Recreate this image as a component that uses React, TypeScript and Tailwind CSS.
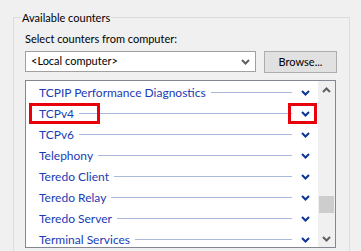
import { ReactNode } from 'react'

const font = { fontFamily: 'Lato, "Liberation Sans", Arial, sans-serif' }

const counters = [
  'TCPIP Performance Diagnostics',
  'TCPv4',
  'TCPv6',
  'Telephony',
  'Teredo Client',
  'Teredo Relay',
  'Teredo Server',
  'Terminal Services',
]

function Chevron({ color, className }: { color: string; className?: string }) {
  return (
    <svg width="9" height="6" viewBox="0 0 9 6" className={className}>
      <path d="M1 1 L4.5 4.5 L8 1" fill="none" stroke={color} strokeWidth="2" />
    </svg>
  )
}

function Row({ label, marked }: { label: string; marked?: boolean }): ReactNode {
  return (
    <div className="relative flex h-[21px] items-center pl-[13px]">
      <span className="whitespace-nowrap text-[12px] text-[#1a3cb4]">{label}</span>
      <div className="ml-[5px] h-px flex-1 bg-[#a9b9dc]" />
      <div className="flex w-[26px] justify-center">
        <Chevron color="#0b3596" />
      </div>
      {marked && (
        <>
          <div className="absolute left-[3px] top-0 h-[21px] w-[71px] border-[3px] border-[#e8000b]" />
          <div className="absolute right-[1px] top-0 h-[21px] w-[29px] border-[3px] border-[#e8000b]" />
        </>
      )}
    </div>
  )
}

export default function App() {
  return (
    <div className="h-[251px] w-[361px] overflow-hidden bg-[#f0f0f0] pl-[13px] pr-[12px] pt-[10px]" style={font}>
      <fieldset className="h-[260px] border border-[#dcdcdc]">
        <legend className="ml-[7px] px-[1px] text-[11px] leading-[15px] text-black">Available counters</legend>
        <div className="pl-[11px] pr-[12px]">
          <div className="mt-[6px] text-[11px] leading-[15px] text-black">Select counters from computer:</div>
          <div className="mt-[5px] flex items-start gap-[8px]">
            <div className="flex h-[21px] w-[231px] items-center border border-[#a0a0a0] bg-white pl-[5px] pr-[5px]">
              <span className="flex-1 text-[11px] text-black">&lt;Local computer&gt;</span>
              <Chevron color="#606060" />
            </div>
            <button className="h-[22px] w-[73px] border border-[#adadad] bg-[#e1e1e1] text-[11px] text-black">
              Browse...
            </button>
          </div>
          <div className="mt-[7px] flex h-[168px] w-[311px] border border-[#828790] bg-white">
            <div className="flex-1 pt-px">
              {counters.map((c) => (
                <Row key={c} label={c} marked={c === 'TCPv4'} />
              ))}
            </div>
            <div className="flex w-[17px] flex-col bg-[#f0f0f0]">
              <div className="flex h-[17px] items-center justify-center">
                <svg width="9" height="6" viewBox="0 0 9 6">
                  <path d="M1 5 L4.5 1.5 L8 5" fill="none" stroke="#606060" strokeWidth="2" />
                </svg>
              </div>
              <div className="flex-1">
                <div className="mx-px mt-[98px] h-[17px] bg-[#cdcdcd]" />
              </div>
              <div className="flex h-[17px] items-center justify-center">
                <Chevron color="#606060" />
              </div>
            </div>
          </div>
        </div>
      </fieldset>
    </div>
  )
}
